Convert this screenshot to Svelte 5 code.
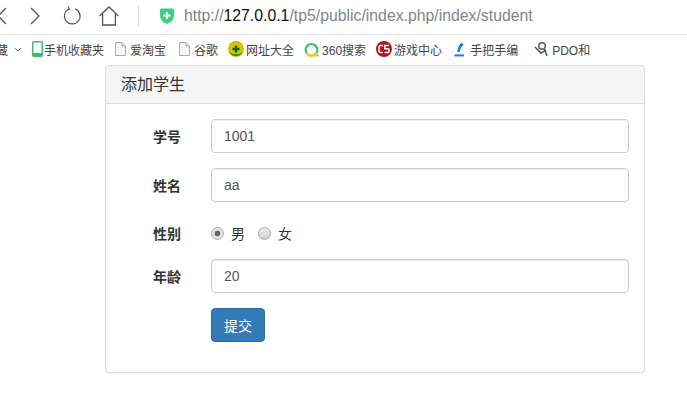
<script>
  let name = $state('aa');
  let number = $state('1001');
  let age = $state('20');
  let gender = $state('m');
</script>

<div class="page">
  <!-- Browser toolbar -->
  <div class="toolbar">
    <svg class="nav back" width="8" height="18" viewBox="0 0 8 18" fill="none">
      <path d="M6 1L-2 9L6 17" stroke="#555" stroke-width="1.3" />
    </svg>
    <svg class="nav forward" width="12" height="18" viewBox="0 0 12 18" fill="none">
      <path d="M2 1L10 9L2 17" stroke="#555" stroke-width="1.3" />
    </svg>
    <svg class="nav reload" width="19" height="20" viewBox="0 0 20 22" fill="none">
      <path d="M6 3.4A8.6 8.6 0 1 0 13 3.2M5.2 0.4L6.6 3.6L3.4 5" stroke="#555" stroke-width="1.3" />
    </svg>
    <svg class="nav home" width="20" height="20" viewBox="0 0 20 20" fill="none">
      <path d="M0.6 10L10 1L19.4 10M3.6 8V19H16.4V8" stroke="#555" stroke-width="1.3" />
    </svg>
    <div class="sep"></div>
    <svg class="shield" width="14" height="16" viewBox="0 0 14 16">
      <path d="M1.5 0.5H12.5Q14 0.5 14 2V8Q14 13 7 16Q0 13 0 8V2Q0 0.5 1.5 0.5Z" fill="#3ecf7c" />
      <path d="M7 4V11M3.5 7.5H10.5" stroke="#fff" stroke-width="2.2" />
    </svg>
    <div class="url">http://<span class="host">127.0.0.1</span>/tp5/public/index.php/index/student</div>
  </div>

  <!-- Bookmarks -->
  <div class="bookmarks">
    <span class="bm cut">藏</span>
    <svg class="chev" width="8" height="5" viewBox="0 0 8 5" fill="none">
      <path d="M1 1L4 4L7 1" stroke="#777" stroke-width="1" />
    </svg>
    <svg class="ic phone" width="11" height="16" viewBox="0 0 11 16" fill="none">
      <rect x="0.75" y="0.75" width="9.5" height="14.5" rx="1" stroke="#3dbb6e" stroke-width="1.5" />
      <rect x="1" y="12" width="9" height="3" fill="#3dbb6e" />
    </svg>
    <span class="bm">手机收藏夹</span>
    <svg class="ic doc" width="11" height="14" viewBox="0 0 11 14" fill="#f7f7f7">
      <path d="M0.5 0.5H7L10.5 4V13.5H0.5ZM7 0.5V4H10.5" stroke="#aaa" />
    </svg>
    <span class="bm">爱淘宝</span>
    <svg class="ic doc second" width="11" height="14" viewBox="0 0 11 14" fill="#f7f7f7">
      <path d="M0.5 0.5H7L10.5 4V13.5H0.5ZM7 0.5V4H10.5" stroke="#aaa" />
    </svg>
    <span class="bm">谷歌</span>
    <svg class="ic site" width="16" height="16" viewBox="0 0 16 16">
      <circle cx="8" cy="8" r="8" fill="#d8c400" />
      <path d="M2 3.5A8 8 0 0 1 14 3.5A7 5 0 0 0 2 3.5Z" fill="#222" />
      <path d="M1 11A8 8 0 0 0 15 11A9 6 0 0 1 1 11Z" fill="#2a8a1c" />
      <path d="M8 4.5V11.5M4.5 8H11.5" stroke="#1b5e14" stroke-width="2.4" />
    </svg>
    <span class="bm">网址大全</span>
    <svg class="ic so" width="15" height="15" viewBox="0 0 15 15" fill="none">
      <path d="M2.6 11A5.8 5.8 0 1 1 12.4 11" stroke="#3cc46a" stroke-width="2.4" />
      <path d="M2.6 11A5.8 5.8 0 0 0 12.4 11" stroke="#f6c12c" stroke-width="2.4" />
      <circle cx="13.6" cy="13.4" r="1.2" fill="#f6a81c" />
    </svg>
    <span class="bm">360搜索</span>
    <svg class="ic game" width="16" height="16" viewBox="0 0 16 16" fill="none">
      <circle cx="8" cy="8" r="8" fill="#b5121b" />
      <path d="M7 4.6H4.6Q3 4.6 3 6.2V9.8Q3 11.4 4.6 11.4H7M13 4.6H8.8V7.8H12Q13 7.8 13 9V10.4Q13 11.4 12 11.4H8.6" stroke="#fff" stroke-width="1.5" />
    </svg>
    <span class="bm">游戏中心</span>
    <svg class="ic pen" width="11" height="15" viewBox="0 0 11 15" fill="none">
      <path d="M7.6 0.8Q4 3 3.2 10L5.4 10Q6.4 5.4 9.6 2.4Z" fill="#0a84f0" />
      <path d="M0.5 13.4H10" stroke="#0a84f0" stroke-width="2" />
    </svg>
    <span class="bm">手把手编</span>
    <svg class="ic pdo" width="14" height="16" viewBox="0 0 14 16" fill="none">
      <circle cx="8" cy="5" r="3.2" stroke="#555" stroke-width="1.4" />
      <path d="M1 6L7 12L12 9M10.5 8L13 15" stroke="#444" stroke-width="1.4" />
    </svg>
    <span class="bm">PDO和</span>
  </div>

  <!-- Panel -->
  <div class="panel">
    <div class="panel-heading">添加学生</div>
    <form class="panel-body" onsubmit={(e) => e.preventDefault()}>
      <div class="form-group">
        <label class="lbl" for="number">学号</label>
        <input id="number" class="form-control" bind:value={number} />
      </div>
      <div class="form-group">
        <label class="lbl" for="name">姓名</label>
        <input id="name" class="form-control" bind:value={name} />
      </div>
      <div class="form-group radios">
        <span class="lbl">性别</span>
        <label class="radio"><input type="radio" value="m" bind:group={gender} />男</label>
        <label class="radio"><input type="radio" value="f" bind:group={gender} />女</label>
      </div>
      <div class="form-group">
        <label class="lbl" for="age">年龄</label>
        <input id="age" class="form-control" bind:value={age} />
      </div>
      <div class="form-group">
        <span class="lbl"></span>
        <button class="btn" type="submit">提交</button>
      </div>
    </form>
  </div>
</div>

<style>
  :global(body) {
    background: #fff;
  }

  .page {
    width: 687px;
    height: 407px;
    overflow: hidden;
    font-family: "Liberation Sans", "Noto Sans CJK SC", sans-serif;
    color: #333;
  }

  .toolbar {
    height: 35px;
    box-sizing: border-box;
    padding-bottom: 2px;
    display: flex;
    align-items: center;
    border-bottom: 1px solid #e4e4e4;
  }

  .nav {
    flex-shrink: 0;
  }

  .back {
    margin-right: 21px;
  }

  .forward {
    margin-right: 22px;
  }

  .reload {
    margin-right: 17px;
  }

  .home {
    margin-right: 19px;
  }

  .sep {
    width: 1px;
    height: 20px;
    background: #ddd;
    margin-right: 21px;
  }

  .shield {
    margin-right: 10px;
  }

  .url {
    font-size: 15.8px;
    color: #80868c;
    white-space: nowrap;
  }

  .host {
    color: #111;
  }

  .bookmarks {
    height: 29px;
    padding-bottom: 1px;
    box-sizing: border-box;
    display: flex;
    align-items: center;
    font-size: 12px;
    white-space: nowrap;
  }

  .bm {
    color: #444;
    flex-shrink: 0;
  }

  .cut {
    margin-left: -4px;
    margin-right: 6px;
  }

  .chev {
    margin-right: 10px;
  }

  .ic {
    flex-shrink: 0;
  }

  .phone {
    margin-right: 1px;
  }

  .doc {
    margin-left: 11px;
    margin-right: 4px;
  }

  .doc.second {
    margin-left: 13px;
  }

  .site {
    margin-left: 10px;
    margin-right: 2px;
  }

  .so {
    margin-left: 10px;
    margin-right: 3px;
  }

  .game {
    margin-left: 10px;
    margin-right: 2px;
  }

  .pen {
    margin-left: 12px;
    margin-right: 5px;
  }

  .pdo {
    margin-left: 16px;
    margin-right: 4px;
  }

  .panel {
    width: 540px;
    margin-left: 105px;
    margin-top: 1px;
    border: 1px solid #ddd;
    border-radius: 4px;
    box-shadow: 0 1px 1px rgba(0, 0, 0, 0.05);
    box-sizing: border-box;
    background: #fff;
  }

  .panel-heading {
    height: 38px;
    box-sizing: border-box;
    padding: 0 15px;
    line-height: 37px;
    font-size: 16px;
    color: #333;
    background: #f5f5f5;
    border-bottom: 1px solid #ddd;
    border-radius: 3px 3px 0 0;
  }

  .panel-body {
    padding: 15px;
  }

  .form-group {
    display: flex;
    align-items: center;
    margin-bottom: 15px;
  }

  .radios {
    height: 27px;
    box-sizing: border-box;
    padding-top: 5px;
  }

  .lbl {
    width: 90px;
    padding-left: 32px;
    box-sizing: border-box;
    flex-shrink: 0;
    font-size: 14px;
    font-weight: 700;
    color: #333;
  }

  .form-control {
    flex: 1;
    min-width: 0;
    height: 34px;
    box-sizing: border-box;
    padding: 6px 12px;
    font: inherit;
    font-size: 14px;
    color: #555;
    background: #fff;
    border: 1px solid #ccc;
    border-radius: 4px;
    box-shadow: inset 0 1px 1px rgba(0, 0, 0, 0.075);
    outline: none;
  }

  .radio {
    display: flex;
    align-items: center;
    font-size: 14px;
    color: #333;
    margin-right: 13px;
  }

  .radio input {
    appearance: none;
    width: 13px;
    height: 13px;
    margin: 0 7px 0 0;
    border: 1px solid #aaa;
    border-radius: 50%;
    background: linear-gradient(#eee, #d2d2d2);
    box-sizing: border-box;
  }

  .radio input:checked {
    background: radial-gradient(circle, #666 0 2.6px, #e4e4e4 3.2px);
  }

  .btn {
    width: 54px;
    height: 34px;
    padding: 0;
    font: inherit;
    font-size: 14px;
    color: #fff;
    background: #337ab7;
    border: 1px solid #2e6da4;
    border-radius: 4px;
  }
</style>
